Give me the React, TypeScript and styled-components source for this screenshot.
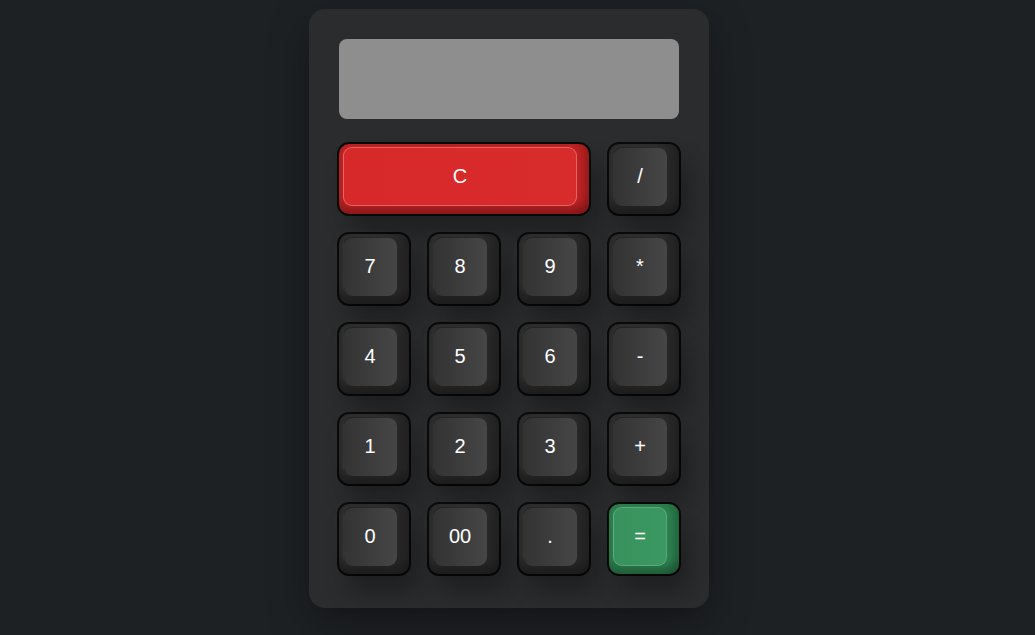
import React from "react";
import styled, { createGlobalStyle, css } from "styled-components";

type Tone = "dark" | "red" | "green";

interface KeyDef {
  label: string;
  span?: number;
  tone?: Tone;
}

const keys: KeyDef[] = [
  { label: "C", span: 3, tone: "red" },
  { label: "/" },
  { label: "7" },
  { label: "8" },
  { label: "9" },
  { label: "*" },
  { label: "4" },
  { label: "5" },
  { label: "6" },
  { label: "-" },
  { label: "1" },
  { label: "2" },
  { label: "3" },
  { label: "+" },
  { label: "0" },
  { label: "00" },
  { label: "." },
  { label: "=", tone: "green" },
];

const tones = {
  dark: { rim: "#2c2c2d", capFrom: "#333334", capTo: "#464647", edge: "rgba(255,255,255,0.03)" },
  red: { rim: "#c52425", capFrom: "#d8292a", capTo: "#d82b2b", edge: "rgba(255,255,255,0.28)" },
  green: { rim: "#2e8551", capFrom: "#38925d", capTo: "#3b9861", edge: "rgba(255,255,255,0.18)" },
};

const GlobalStyle = createGlobalStyle`
  html, body {
    margin: 0;
    padding: 0;
    background: #1e2124;
    font-family: "Liberation Sans", Arial, sans-serif;
  }
`;

const Page = styled.div`
  min-height: 100vh;
  display: flex;
  justify-content: center;
  align-items: flex-start;
  padding: 9px 17px 0 0;
  box-sizing: border-box;
`;

const Body = styled.div`
  width: 400px;
  box-sizing: border-box;
  padding: 30px 30px 34px;
  background: #2b2c2e;
  border-radius: 16px;
  box-shadow: 0 15px 40px rgba(0, 0, 0, 0.35);
`;

const Screen = styled.div`
  height: 80px;
  border-radius: 8px;
  background: #8e8e8e;
  margin-bottom: 25px;
`;

const Keypad = styled.div`
  display: grid;
  grid-template-columns: repeat(4, 70px);
  grid-auto-rows: 70px;
  gap: 20px;
`;

const Key = styled.button<{ $span: number; $tone: Tone }>`
  position: relative;
  grid-column: span ${(p) => p.$span};
  border: none;
  padding: 0;
  border-radius: 10px;
  background: ${(p) => tones[p.$tone].rim};
  box-shadow: inset -8px 0 8px rgba(0, 0, 0, 0.15),
    inset 0 -8px 8px rgba(0, 0, 0, 0.25), 0 0 0 2px rgba(0, 0, 0, 0.8),
    10px 18px 25px rgba(0, 0, 0, 0.3);
  cursor: pointer;

  &::before {
    content: "";
    position: absolute;
    top: 3px;
    left: 4px;
    right: 12px;
    bottom: 8px;
    border-radius: 9px;
    background: linear-gradient(
      90deg,
      ${(p) => tones[p.$tone].capFrom},
      ${(p) => tones[p.$tone].capTo}
    );
    ${(p) =>
      p.$tone === "dark"
        ? css`
            box-shadow: -4px -4px 12px rgba(255, 255, 255, 0.04),
              4px 4px 12px rgba(0, 0, 0, 0.12);
            border-top: 1px solid rgba(0, 0, 0, 0.35);
            border-left: 1px solid rgba(0, 0, 0, 0.25);
          `
        : css`
            border: 1px solid ${tones[p.$tone].edge};
          `}
  }
`;

const Label = styled.span`
  position: absolute;
  top: 3px;
  left: 4px;
  right: 12px;
  bottom: 9px;
  display: flex;
  align-items: center;
  justify-content: center;
  color: #ffffff;
  font-family: "Liberation Sans", Arial, sans-serif;
  font-size: 20px;
`;

export default function App() {
  return (
    <>
      <GlobalStyle />
      <Page>
        <Body>
          <Screen />
          <Keypad>
            {keys.map((k) => (
              <Key key={k.label} $span={k.span ?? 1} $tone={k.tone ?? "dark"}>
                <Label>{k.label}</Label>
              </Key>
            ))}
          </Keypad>
        </Body>
      </Page>
    </>
  );
}
